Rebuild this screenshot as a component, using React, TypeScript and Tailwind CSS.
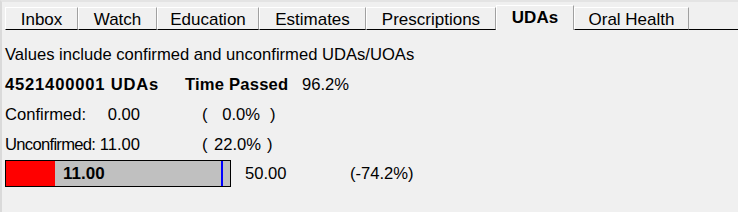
const TABS = [
  { label: 'Inbox', w: 'w-[73px]' },
  { label: 'Watch', w: 'w-[79px]' },
  { label: 'Education', w: 'w-[102px]' },
  { label: 'Estimates', w: 'w-[107px]' },
  { label: 'Prescriptions', w: 'w-[130px]' },
  { label: 'UDAs', w: 'w-[78px]', active: true },
  { label: 'Oral Health', w: 'w-[115px]' },
];

export default function App() {
  return (
    <div
      className="w-[738px] h-[212px] bg-[#f0f0f0] border-t-[2px] border-l-[2px] border-t-[#e4e4e4] border-l-[#dadada] text-black overflow-hidden"
      style={{ fontFamily: '"Liberation Sans", Arial, sans-serif' }}
    >
      {/* tab strip */}
      <div className="flex items-end h-[28px] pl-[3px]">
        {TABS.map((t) =>
          t.active ? (
            <div
              key={t.label}
              className={`${t.w} h-[25px] flex items-center justify-center pb-[1px] border-t border-l border-white border-r border-r-[#a0a0a0] font-bold text-[17px] leading-none`}
            >
              {t.label}
            </div>
          ) : (
            <div
              key={t.label}
              className={`${t.w} h-[23px] flex items-center justify-center pt-[1px] border-t border-l border-white border-r border-r-[#a0a0a0] border-b border-b-black text-[17px] leading-none`}
            >
              {t.label}
            </div>
          )
        )}
        <div className="flex-1 border-b border-black" />
      </div>

      <div className="pl-[3px] pt-[10px] text-[16.6px] leading-[30px]">
        <div>Values include confirmed and unconfirmed UDAs/UOAs</div>
        <div className="flex">
          <span className="font-bold tracking-[0.8px] w-[180px]">4521400001 UDAs</span>
          <span className="font-bold tracking-[0.2px] w-[117px]">Time Passed</span>
          <span>96.2%</span>
        </div>
        <div className="flex whitespace-nowrap">
          <span className="w-[88px]">Confirmed:</span>
          <span className="w-[47px] text-right">0.00</span>
          <span className="w-[62px]" />
          <span className="w-[20px]">(</span>
          <span className="w-[38px] text-right">0.0%</span>
          <span className="pl-[10px]">)</span>
        </div>
        <div className="flex whitespace-nowrap">
          <span className="w-[88px] tracking-[-0.7px]">Unconfirmed:</span>
          <span className="w-[47px] text-right">11.00</span>
          <span className="w-[62px]" />
          <span className="w-[12px]">(</span>
          <span className="w-[46px] text-right">22.0%</span>
          <span className="pl-[7px]">)</span>
        </div>
        <div className="flex items-center h-[27px]">
          <div className="relative w-[226px] h-[27px] border border-black bg-[#c0c0c0] flex">
            <div className="w-[49px] h-full bg-[#ff0000]" />
            <span className="pl-[8px] font-bold text-[17px] leading-[25px]">11.00</span>
            <div className="absolute left-[215px] top-0 w-[2px] h-full bg-[#0000ff]" />
          </div>
          <span className="w-[119px] pl-[14px]">50.00</span>
          <span>(-74.2%)</span>
        </div>
      </div>
    </div>
  );
}
